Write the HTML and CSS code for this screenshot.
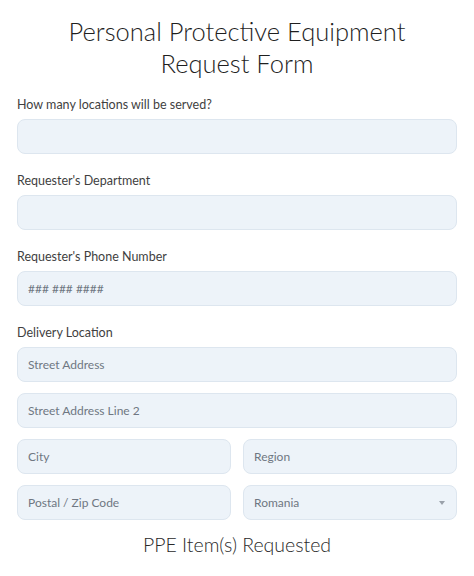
FILE: index.html
```html
<!DOCTYPE html>
<html lang="en">
<head>
    <meta charset="UTF-8">
    <meta name="viewport" content="width=device-width, initial-scale=1.0">
    <title>PPE Request Form</title>
    <link rel="stylesheet" href="styles.css">
</head>
<body>
    <form class="form">
        <h1 class="form-title">Personal Protective Equipment<br>Request Form</h1>

        <div class="field">
            <label class="field-label" for="locations">How many locations will be served?</label>
            <input class="field-input" id="locations" type="text">
        </div>

        <div class="field">
            <label class="field-label" for="department">Requester's Department</label>
            <input class="field-input" id="department" type="text">
        </div>

        <div class="field">
            <label class="field-label" for="phone">Requester's Phone Number</label>
            <input class="field-input" id="phone" type="text" placeholder="### ### ####">
        </div>

        <div class="field field-address">
            <label class="field-label" for="street">Delivery Location</label>
            <div class="address">
                <input class="field-input wide" id="street" type="text" placeholder="Street Address">
                <input class="field-input wide" type="text" placeholder="Street Address Line 2">
                <input class="field-input" type="text" placeholder="City">
                <input class="field-input" type="text" placeholder="Region">
                <input class="field-input" type="text" placeholder="Postal / Zip Code">
                <div class="select-wrap">
                    <select class="field-input field-select">
                        <option>Romania</option>
                    </select>
                </div>
            </div>
        </div>

        <h2 class="section-title">PPE Item(s) Requested</h2>
    </form>
</body>
</html>
```

FILE: styles.css
```css
body {
    margin: 0;
    background-color: #ffffff;
    font-family: Lato, "Open Sans", sans-serif;
    color: #3c3c3c;
}

.form {
    padding: 15px 17px 0;
}

.form-title {
    margin: 0 0 17px;
    font-size: 25.5px;
    line-height: 32px;
    font-weight: 300;
    text-align: center;
    color: #1f1f1f;
}

.field {
    margin-bottom: 18px;
}

.field-address {
    margin-bottom: 12px;
}

.field-label {
    display: block;
    margin-bottom: 5px;
    font-size: 12.5px;
    line-height: 18px;
    color: #3f3f3f;
}

.field-input {
    display: block;
    box-sizing: border-box;
    width: 100%;
    height: 35px;
    margin: 0;
    padding: 0 10px;
    border: 1px solid #dde6ef;
    border-radius: 8px;
    background-color: #edf3f9;
    font-family: inherit;
    font-size: 12px;
    color: #5c6470;
    outline: none;
}

.field-input::placeholder {
    color: #6f7782;
}

.address {
    display: grid;
    grid-template-columns: 1fr 1fr;
    column-gap: 12px;
    row-gap: 11px;
}

.address .wide {
    grid-column: 1 / 3;
}

.select-wrap {
    position: relative;
}

.field-select {
    appearance: none;
    -webkit-appearance: none;
    color: #6f7782;
}

.select-wrap::after {
    content: "";
    position: absolute;
    right: 12px;
    top: 16px;
    border-left: 3px solid transparent;
    border-right: 3px solid transparent;
    border-top: 4px solid #9aa1aa;
    pointer-events: none;
}

.section-title {
    margin: 0;
    font-size: 19.5px;
    line-height: 26px;
    font-weight: 300;
    text-align: center;
    color: #2a2a2a;
}
```
